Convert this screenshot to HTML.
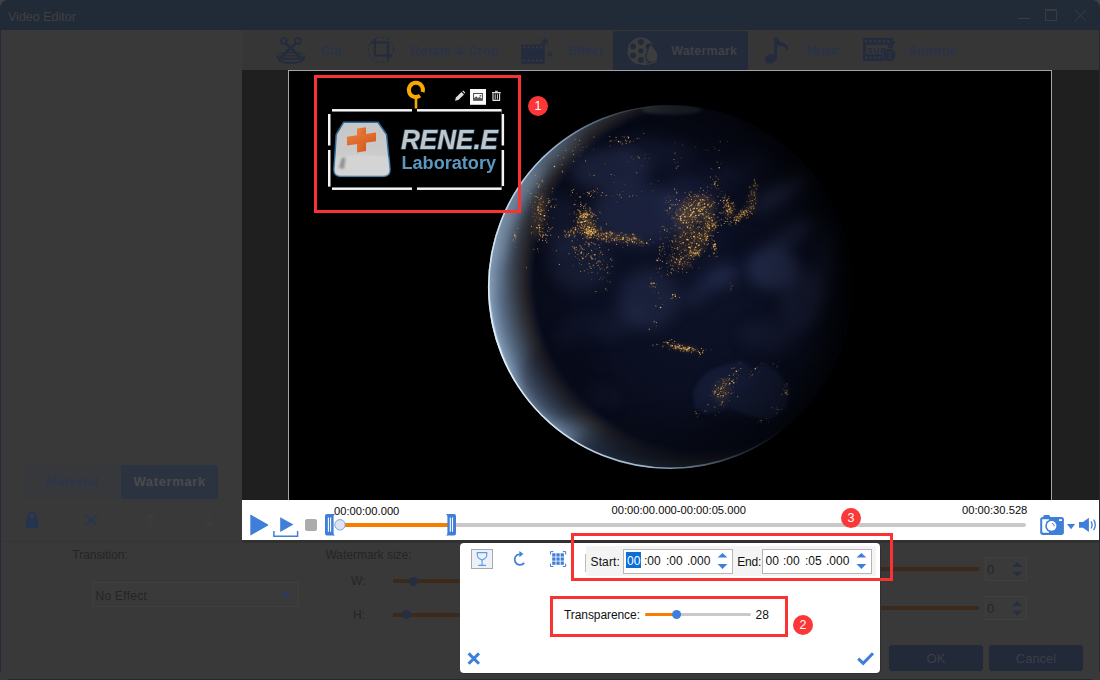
<!DOCTYPE html>
<html>
<head>
<meta charset="utf-8">
<title>Video Editor</title>
<style>
html,body{margin:0;padding:0;}
body{width:1100px;height:680px;overflow:hidden;position:relative;background:#393939;font-family:"Liberation Sans",sans-serif;font-size:13px;color:#222;}
.abs{position:absolute;}
#titlebar{left:0;top:0;width:1100px;height:30px;background:#212a37;border-radius:8px 8px 0 0;}
#tbcorner{left:0;top:0;width:1100px;height:10px;background:#424242;}
#title{left:8px;top:10px;font-size:12.5px;color:#42403f;line-height:15px;white-space:nowrap;}
#lborder{left:0;top:30px;width:1px;height:642px;background:#212a37;}
#rborder{left:1099px;top:30px;width:1px;height:642px;background:#212a37;}
#bborder{left:8px;top:679px;width:1084px;height:1px;background:#212a37;}
#toolbar{left:242px;top:30px;width:857px;height:40px;background:#363636;}
#tabsel{left:613px;top:31px;width:135px;height:39px;background:#232b3a;border-radius:2px 2px 0 0;}
.tbtxt{top:42.5px;font-size:12.5px;font-weight:bold;color:#2a3349;line-height:16px;white-space:nowrap;}
#preview{left:242px;top:70px;width:857px;height:430px;background:#1f1f1f;}
#video{left:288px;top:70px;width:764px;height:430px;background:#000;box-sizing:border-box;border:1px solid #a3a3ab;border-bottom:none;overflow:hidden;}
#playbar{left:242px;top:500px;width:857px;height:40px;background:#fff;}
.time{font-size:11.2px;color:#0a0a0a;line-height:14px;white-space:nowrap;}
.redbox{border:3px solid #fb3232;box-sizing:border-box;}
.badge{width:20px;height:20px;border-radius:10px;background:#fc3737;color:#fff;font-size:12.5px;line-height:20px;text-align:center;}
#popup{left:460px;top:543px;width:420px;height:130px;background:#fff;border-radius:4px;box-shadow:1px 1px 0 #2f2f2f;}
#shadowline{left:242px;top:540px;width:857px;height:3px;background:#313131;}
.dimtxt{color:#232323;font-size:13px;line-height:15px;white-space:nowrap;}
</style>
</head>
<body>
<div id="tbcorner" class="abs"></div>
<div id="titlebar" class="abs"></div>
<div id="title" class="abs">Video Editor</div>
<div id="lborder" class="abs"></div>
<div id="rborder" class="abs"></div>
<div id="bborder" class="abs"></div>

<div id="toolbar" class="abs"></div>
<div id="tabsel" class="abs"></div>
<div class="abs tbtxt" style="left:320.7px">Cut</div>
<div class="abs tbtxt" style="left:410px;letter-spacing:.36px">Rotate &amp; Crop</div>
<div class="abs tbtxt" style="left:568px">Effect</div>
<div class="abs tbtxt" style="left:671.2px;color:#3f4045;letter-spacing:.2px">Watermark</div>
<div class="abs tbtxt" style="left:806.4px;letter-spacing:-.4px">Music</div>
<div class="abs tbtxt" style="left:908.4px;letter-spacing:.33px">Subtitle</div>

<svg class="abs" style="left:242px;top:30px" width="857" height="40" viewBox="242 30 857 40">
<g fill="none" stroke="#232b3e" stroke-width="1.6">
<!-- scissors -->
<circle cx="283.8" cy="40.9" r="2.9"/><circle cx="297.8" cy="40.9" r="2.9"/>
<path d="M285.6 43.4 L300.5 57 M296 43.4 L281 57" stroke-width="2.4"/>
<path d="M277.5 55.5 Q277.5 63 291 63 Q304.5 63 304.5 55.5" stroke-width="1.8"/>
<path d="M279 59 H303 M284 55.8 H298 M286.5 52.6 H295.5" stroke-width="1.3"/>
<ellipse cx="291" cy="55.5" rx="13.5" ry="3" stroke-width="1"/>
<!-- crop -->
<path d="M375 38.5 V55.5 H392" stroke-width="2.2"/>
<path d="M371 42.5 H388 V59.5" stroke-width="2.2"/>
<circle cx="381" cy="49.8" r="12.6" stroke-width="1" stroke-dasharray="3 2.4"/>
</g>
<g fill="#232b3e">
<!-- film + sparkles -->
<path d="M521.2 44.4 H544.6 V63.7 H521.2 Z M523 46.2 V48.6 H525.4 V46.2 Z M527.3 46.2 V48.6 H529.7 V46.2 Z M531.6 46.2 V48.6 H534 V46.2 Z M535.9 46.2 V48.6 H538.3 V46.2 Z M540.2 46.2 V48.6 H542.6 V46.2 Z M523 59.4 V61.8 H525.4 V59.4 Z M527.3 59.4 V61.8 H529.7 V59.4 Z M531.6 59.4 V61.8 H534 V59.4 Z M535.9 59.4 V61.8 H538.3 V59.4 Z M540.2 59.4 V61.8 H542.6 V59.4 Z" fill-rule="evenodd"/>
<path d="M544.5 37.5 V46 M540.5 39.5 L548.5 44 M548.5 39.5 L540.5 44" stroke="#232b3e" stroke-width="1.2" fill="none"/>
<path d="M550 51.8 V57.2 M547.4 53 L552.6 56 M552.6 53 L547.4 56" stroke="#232b3e" stroke-width="1" fill="none"/>
<!-- music -->
<ellipse cx="770.5" cy="58.8" rx="5.6" ry="4.6" transform="rotate(-20 770.5 58.8)"/>
<path d="M774.3 59 V37.5 H777 Q779 42 784 43.5 Q789.5 45.5 787.5 51.5 Q786.5 46.5 781 46 Q778 45.6 777 44.5 V59 Z"/>
<!-- sub -->
<path d="M863 38 H893 V41 H896 L893 45 V61 H863 Z M865 40 V42.4 H867.4 V40 Z M869.4 40 V42.4 H871.8 V40 Z M873.8 40 V42.4 H876.2 V40 Z M878.2 40 V42.4 H880.6 V40 Z M882.6 40 V42.4 H885 V40 Z M887 40 V42.4 H889.4 V40 Z M865 56.4 V58.8 H867.4 V56.4 Z M869.4 56.4 V58.8 H871.8 V56.4 Z M873.8 56.4 V58.8 H876.2 V56.4 Z M878.2 56.4 V58.8 H880.6 V56.4 Z M866 45 H888 V54 H866 Z" fill-rule="evenodd"/>
<circle cx="889.4" cy="55" r="6.6" stroke="#363636" stroke-width="1"/>
</g>
<text x="867" y="52.6" font-family="Liberation Sans, sans-serif" font-size="8" font-weight="bold" fill="#232b3e" textLength="19">SUB</text>
<text x="886.6" y="58.6" font-family="Liberation Serif, serif" font-size="9.5" font-weight="bold" fill="#363636">T</text>
<!-- reel (on selected tab) -->
<g>
<circle cx="640.9" cy="50.9" r="13.4" fill="#3d3d3e"/>
<g fill="#232b3a">
<circle cx="640.9" cy="50.9" r="2.7"/>
<circle cx="640.9" cy="41.9" r="3"/><circle cx="648.7" cy="46.4" r="3"/><circle cx="648.7" cy="55.4" r="3"/><circle cx="640.9" cy="59.9" r="3"/><circle cx="633.1" cy="55.4" r="3"/><circle cx="633.1" cy="46.4" r="3"/>
</g>
<path d="M650.5 44 Q659.5 52 658 58 Q656.5 63 651 62.5 Q645.5 61.5 646 56 Q646.5 51 650.5 44 Z" fill="#3d3d3e" stroke="#232b3a" stroke-width="1.3"/>
<path d="M641 64 Q650 65.5 657 61" fill="none" stroke="#3d3d3e" stroke-width="1.3"/>
</g>
<!-- window controls -->
</svg>
<svg class="abs" style="left:1010px;top:0" width="90" height="30" viewBox="1010 0 90 30">
<path d="M1018 18.5 H1030" stroke="#3a3b40" stroke-width="1"/>
<rect x="1045.5" y="9.5" width="11" height="11" fill="none" stroke="#3a3b40" stroke-width="1"/>
<rect x="1045" y="9" width="12" height="2" fill="#3a3b40"/>
<path d="M1075 10 L1086 21 M1086 10 L1075 21" stroke="#3a3b40" stroke-width="1" fill="none"/>
</svg>

<div id="preview" class="abs"></div>
<div id="video" class="abs">
<svg class="abs" id="earth" style="left:0;top:0" width="762" height="429" viewBox="289 71 762 429">
<defs>
<clipPath id="ec"><circle cx="670" cy="287" r="182"/></clipPath>
<radialGradient id="eg" gradientUnits="userSpaceOnUse" cx="706.7" cy="277.2" r="220">
<stop offset="0" stop-color="#0e1328"/><stop offset=".5" stop-color="#0b0f22"/><stop offset=".78" stop-color="#080b19"/>
<stop offset=".79" stop-color="#0a0e1e"/><stop offset=".827" stop-color="#242228"/><stop offset=".864" stop-color="#323741"/><stop offset=".909" stop-color="#465569"/>
<stop offset=".945" stop-color="#5c708a"/><stop offset=".984" stop-color="#7d96af"/><stop offset="1" stop-color="#c8deee"/></radialGradient>
<radialGradient id="sh" gradientUnits="userSpaceOnUse" cx="590" cy="300" r="275">
<stop offset="0" stop-color="#000" stop-opacity="0"/><stop offset=".55" stop-color="#000" stop-opacity="0"/>
<stop offset=".8" stop-color="#000" stop-opacity=".36"/><stop offset=".95" stop-color="#000" stop-opacity=".86"/><stop offset="1" stop-color="#000" stop-opacity="1"/></radialGradient>
<linearGradient id="rim" gradientUnits="userSpaceOnUse" x1="488" y1="330" x2="720" y2="250">
<stop offset="0" stop-color="#e4f0fa" stop-opacity="1"/><stop offset=".45" stop-color="#b8d4ea" stop-opacity=".8"/><stop offset=".8" stop-color="#7fa0c0" stop-opacity=".25"/><stop offset="1" stop-color="#7fa0c0" stop-opacity="0"/></linearGradient>
<filter color-interpolation-filters="sRGB" id="bl9" x="-50%" y="-50%" width="200%" height="200%"><feGaussianBlur stdDeviation="7"/></filter>
<filter color-interpolation-filters="sRGB" id="bl1" x="-20%" y="-20%" width="140%" height="140%"><feGaussianBlur stdDeviation=".4"/></filter>
<filter color-interpolation-filters="sRGB" id="bl2" x="-20%" y="-20%" width="140%" height="140%"><feGaussianBlur stdDeviation="1.6"/></filter>
<filter color-interpolation-filters="sRGB" id="bl3" x="-50%" y="-50%" width="200%" height="200%"><feGaussianBlur stdDeviation="2.6"/></filter>
</defs>
<g clip-path="url(#ec)">
<rect x="480" y="100" width="380" height="380" fill="url(#eg)"/>
<g filter="url(#bl9)" fill="#313c62">
<ellipse cx="773" cy="268" rx="26" ry="22" transform="rotate(0 773 268)" opacity="0.62"/>
<ellipse cx="792" cy="236" rx="30" ry="9" transform="rotate(-35 792 236)" opacity="0.40"/>
<ellipse cx="722" cy="276" rx="16" ry="11" transform="rotate(-20 722 276)" opacity="0.45"/>
<ellipse cx="700" cy="292" rx="22" ry="9" transform="rotate(-35 700 292)" opacity="0.30"/>
<ellipse cx="648" cy="300" rx="30" ry="30" transform="rotate(0 648 300)" opacity="0.36"/>
<ellipse cx="782" cy="192" rx="34" ry="9" transform="rotate(-32 782 192)" opacity="0.50"/>
<ellipse cx="803" cy="300" rx="22" ry="30" transform="rotate(10 803 300)" opacity="0.34"/>
<ellipse cx="826" cy="262" rx="10" ry="40" transform="rotate(8 826 262)" opacity="0.30"/>
<ellipse cx="770" cy="335" rx="30" ry="16" transform="rotate(0 770 335)" opacity="0.22"/>
<ellipse cx="610" cy="170" rx="40" ry="22" transform="rotate(0 610 170)" opacity="0.40"/>
<ellipse cx="640" cy="215" rx="50" ry="30" transform="rotate(0 640 215)" opacity="0.40"/>
<ellipse cx="580" cy="262" rx="30" ry="30" transform="rotate(0 580 262)" opacity="0.28"/>
<ellipse cx="690" cy="200" rx="30" ry="26" transform="rotate(0 690 200)" opacity="0.22"/>
<ellipse cx="620" cy="322" rx="30" ry="14" transform="rotate(-25 620 322)" opacity="0.16"/>
<ellipse cx="575" cy="330" rx="26" ry="12" transform="rotate(-35 575 330)" opacity="0.12"/>
<ellipse cx="600" cy="395" rx="22" ry="10" transform="rotate(10 600 395)" opacity="0.12"/>
<ellipse cx="745" cy="392" rx="42" ry="24" transform="rotate(0 745 392)" opacity="0.20"/>
<ellipse cx="560" cy="225" rx="20" ry="30" transform="rotate(0 560 225)" opacity="0.20"/>
<ellipse cx="655" cy="150" rx="40" ry="16" transform="rotate(0 655 150)" opacity="0.20"/>
<ellipse cx="740" cy="170" rx="30" ry="12" transform="rotate(-20 740 170)" opacity="0.18"/>
</g>
<ellipse cx="672" cy="110" rx="30" ry="5" fill="#3c474a" opacity=".75" filter="url(#bl2)"/>
<g filter="url(#bl9)" fill="#070a16">
<ellipse cx="690" cy="448" rx="130" ry="34" transform="rotate(-4 690 448)" opacity="0.45"/>
<ellipse cx="770" cy="420" rx="60" ry="40" transform="rotate(-30 770 420)" opacity="0.30"/>
<ellipse cx="700" cy="125" rx="60" ry="18" transform="rotate(0 700 125)" opacity="0.55"/>
<ellipse cx="760" cy="160" rx="40" ry="20" transform="rotate(20 760 160)" opacity="0.40"/>
<ellipse cx="560" cy="380" rx="40" ry="40" transform="rotate(0 560 380)" opacity="0.35"/>
<ellipse cx="640" cy="455" rx="80" ry="14" transform="rotate(0 640 455)" opacity="0.40"/>
<ellipse cx="740" cy="240" rx="16" ry="10" transform="rotate(-30 740 240)" opacity="0.35"/>
</g>
<path d="M693 392 Q700 372 722 366 L742 360 L752 370 L764 362 L778 372 L790 390 L786 408 L770 420 L748 416 L730 408 L706 414 L694 408Z" fill="#1a2340" opacity=".5" filter="url(#bl2)"/>
<g filter="url(#bl3)" fill="#a87433">
<ellipse cx="540.0" cy="217.0" rx="6.0" ry="22.5" transform="rotate(8 540.0 217.0)" opacity="0.17"/>
<ellipse cx="585.0" cy="218.0" rx="7.5" ry="9.0" transform="rotate(20 585.0 218.0)" opacity="0.23"/>
<ellipse cx="590.0" cy="230.0" rx="9.0" ry="7.5" transform="rotate(0 590.0 230.0)" opacity="0.23"/>
<ellipse cx="572.0" cy="232.0" rx="9.0" ry="3.0" transform="rotate(-25 572.0 232.0)" opacity="0.14"/>
<ellipse cx="612.0" cy="237.0" rx="16.5" ry="4.5" transform="rotate(6 612.0 237.0)" opacity="0.19"/>
<ellipse cx="634.0" cy="240.0" rx="9.0" ry="3.8" transform="rotate(8 634.0 240.0)" opacity="0.17"/>
<ellipse cx="697.0" cy="208.0" rx="19.5" ry="12.8" transform="rotate(-15 697.0 208.0)" opacity="0.19"/>
<ellipse cx="709.0" cy="224.0" rx="6.8" ry="9.0" transform="rotate(0 709.0 224.0)" opacity="0.24"/>
<ellipse cx="686.0" cy="222.0" rx="12.0" ry="12.0" transform="rotate(0 686.0 222.0)" opacity="0.14"/>
<ellipse cx="690.0" cy="243.0" rx="16.5" ry="13.5" transform="rotate(0 690.0 243.0)" opacity="0.14"/>
<ellipse cx="680.0" cy="262.0" rx="12.0" ry="6.0" transform="rotate(10 680.0 262.0)" opacity="0.14"/>
<ellipse cx="694.0" cy="252.5" rx="4.5" ry="3.8" transform="rotate(0 694.0 252.5)" opacity="0.24"/>
<ellipse cx="702.0" cy="236.0" rx="9.0" ry="7.5" transform="rotate(0 702.0 236.0)" opacity="0.17"/>
<ellipse cx="729.0" cy="210.0" rx="4.5" ry="8.2" transform="rotate(0 729.0 210.0)" opacity="0.22"/>
<ellipse cx="746.0" cy="212.0" rx="12.0" ry="3.3" transform="rotate(-32 746.0 212.0)" opacity="0.23"/>
<ellipse cx="753.0" cy="195.0" rx="3.3" ry="12.0" transform="rotate(10 753.0 195.0)" opacity="0.19"/>
<ellipse cx="683.0" cy="348.0" rx="16.5" ry="2.7" transform="rotate(10 683.0 348.0)" opacity="0.20"/>
<ellipse cx="722.0" cy="391.0" rx="9.0" ry="12.0" transform="rotate(20 722.0 391.0)" opacity="0.14"/>
</g>
<g filter="url(#bl1)" stroke-linecap="round" fill="none">
<path stroke="#7d5e36" stroke-width=".9" opacity=".8" d="M534.4 221.9h.1M534.9 220.1h.1M539.6 233.6h.1M544.0 232.4h.1M549.3 229.5h.1M535.3 220.0h.1M553.2 218.1h.1M538.9 222.4h.1M542.1 224.4h.1M540.7 220.3h.1M539.1 228.6h.1M542.8 205.2h.1M538.9 231.6h.1M539.6 211.5h.1M539.1 228.3h.1M545.0 213.3h.1M539.2 240.0h.1M538.4 251.8h.1M540.7 205.9h.1M534.3 205.4h.1M552.3 191.8h.1M540.6 217.7h.1M538.8 203.7h.1M534.8 209.2h.1M542.7 193.8h.1M544.2 210.4h.1M546.0 188.6h.1M538.7 206.3h.1M539.3 213.0h.1M548.3 216.9h.1M532.9 231.9h.1M540.5 213.3h.1M537.0 217.9h.1M534.5 216.6h.1M543.9 209.1h.1M539.2 232.1h.1M532.4 216.6h.1M538.8 232.1h.1M536.5 217.0h.1M539.0 217.8h.1M538.7 204.9h.1M539.1 194.1h.1M532.5 207.6h.1M530.6 202.4h.1M532.3 205.4h.1M534.4 196.7h.1M538.4 192.2h.1M538.0 212.5h.1M540.9 198.9h.1M532.2 211.9h.1M529.5 196.8h.1M529.6 199.0h.1M532.4 186.6h.1M542.7 235.4h.1M542.9 232.3h.1M537.4 241.2h.1M539.3 239.0h.1M549.3 231.6h.1M546.7 242.5h.1M515.7 238.1h.1M515.6 232.8h.1M515.9 247.5h.1M515.8 241.7h.1M513.0 240.5h.1M515.3 242.5h.1M527.6 187.1h.1M536.1 192.9h.1M534.9 185.6h.1M527.4 190.3h.1M537.7 176.0h.1M556.2 199.8h.1M553.2 199.4h.1M555.4 198.7h.1M552.3 198.9h.1M554.8 205.4h.1M550.4 201.9h.1M550.6 200.3h.1M556.3 205.0h.1M591.4 191.2h.1M593.1 192.3h.1M587.6 195.6h.1M580.4 196.6h.1M590.0 191.5h.1M588.9 192.7h.1M597.6 192.4h.1M583.8 193.8h.1M589.1 194.9h.1M577.0 193.5h.1M570.9 195.1h.1M602.8 192.9h.1M580.2 150.2h.1M579.7 155.8h.1M566.5 148.4h.1M582.8 150.3h.1M586.4 146.9h.1M575.3 147.6h.1M582.9 147.6h.1M593.6 149.3h.1M578.6 144.5h.1M611.8 140.7h.1M616.4 139.9h.1M622.1 143.7h.1M622.5 136.5h.1M610.1 145.9h.1M630.5 141.1h.1M609.5 141.3h.1M633.4 141.3h.1M625.7 139.6h.1M614.9 140.5h.1M639.0 138.3h.1M642.0 165.6h.1M648.9 158.3h.1M628.1 161.8h.1M644.8 158.4h.1M631.4 157.2h.1M645.3 154.4h.1M633.2 159.2h.1M604.7 164.1h.1M614.0 182.5h.1M589.6 175.0h.1M614.3 175.4h.1M560.3 159.1h.1M622.6 191.5h.1M616.8 202.0h.1M612.4 195.6h.1M636.6 196.0h.1M617.1 194.7h.1M593.5 197.5h.1M588.9 215.2h.1M582.5 216.5h.1M581.0 223.3h.1M579.5 220.4h.1M591.6 217.6h.1M585.6 220.4h.1M583.0 218.7h.1M577.2 221.0h.1M576.9 214.4h.1M583.7 215.1h.1M582.4 217.0h.1M590.8 219.5h.1M587.8 215.4h.1M582.5 225.5h.1M582.4 217.8h.1M600.8 213.0h.1M583.7 215.6h.1M585.4 235.2h.1M585.3 208.1h.1M569.3 214.1h.1M580.4 215.3h.1M583.7 219.5h.1M592.5 226.6h.1M587.5 214.7h.1M574.0 214.1h.1M585.8 229.9h.1M586.1 212.9h.1M582.6 226.5h.1M578.0 222.2h.1M584.4 215.6h.1M576.1 214.3h.1M583.3 224.2h.1M586.3 210.3h.1M587.8 228.9h.1M585.9 221.2h.1M579.9 230.6h.1M594.1 234.3h.1M594.3 230.9h.1M600.2 229.8h.1M590.3 235.6h.1M586.4 233.4h.1M593.2 225.9h.1M572.0 235.2h.1M589.5 235.0h.1M590.9 222.0h.1M591.4 233.9h.1M585.1 232.8h.1M584.7 225.3h.1M593.7 228.3h.1M582.5 219.2h.1M587.7 223.9h.1M581.9 231.3h.1M584.9 235.0h.1M588.0 222.5h.1M586.6 233.0h.1M596.3 238.6h.1M591.7 225.2h.1M584.9 237.3h.1M587.8 223.3h.1M597.9 230.6h.1M593.2 229.5h.1M587.8 237.9h.1M586.1 238.4h.1M587.4 224.1h.1M594.0 229.9h.1M583.8 230.5h.1M601.1 226.3h.1M579.4 233.3h.1M575.8 230.3h.1M578.7 229.1h.1M573.8 227.2h.1M574.5 230.8h.1M572.9 231.3h.1M570.6 229.9h.1M575.0 229.3h.1M574.8 232.6h.1M569.2 232.1h.1M579.1 225.9h.1M574.1 234.0h.1M570.6 232.6h.1M565.5 236.0h.1M581.1 204.8h.1M577.8 206.1h.1M575.8 200.3h.1M581.1 202.6h.1M585.6 208.4h.1M580.3 211.4h.1M580.5 202.2h.1M616.2 240.2h.1M619.4 237.6h.1M606.7 238.7h.1M608.9 240.7h.1M614.3 238.7h.1M622.8 247.4h.1M606.7 237.4h.1M599.4 236.6h.1M604.3 235.0h.1M606.5 242.2h.1M607.0 237.3h.1M607.2 236.1h.1M602.6 236.6h.1M589.6 229.7h.1M623.0 238.0h.1M602.4 232.2h.1M607.9 234.8h.1M619.5 241.6h.1M611.8 234.7h.1M610.1 236.9h.1M615.2 236.2h.1M599.2 238.0h.1M623.0 242.7h.1M627.4 237.7h.1M611.5 238.4h.1M605.7 239.4h.1M598.8 235.7h.1M610.1 235.7h.1M620.6 233.1h.1M602.5 233.3h.1M610.6 236.4h.1M611.4 233.8h.1M614.6 234.1h.1M618.9 239.5h.1M616.8 238.2h.1M618.8 239.5h.1M600.1 237.7h.1M608.3 233.8h.1M633.0 237.2h.1M619.3 235.4h.1M635.0 239.6h.1M641.8 246.1h.1M635.1 239.1h.1M631.8 238.9h.1M623.3 235.8h.1M632.2 237.5h.1M633.3 237.9h.1M632.4 242.7h.1M639.7 245.0h.1M628.5 237.2h.1M625.6 238.0h.1M639.3 239.8h.1M636.8 240.0h.1M632.8 239.0h.1M639.1 240.6h.1M641.5 241.7h.1M630.0 234.9h.1M630.1 239.5h.1M626.4 239.2h.1M643.6 245.7h.1M653.3 242.3h.1M642.0 243.2h.1M642.9 241.2h.1M649.1 244.3h.1M647.4 243.2h.1M648.2 240.3h.1M641.6 241.4h.1M592.1 252.0h.1M589.1 245.8h.1M578.2 250.8h.1M580.3 253.6h.1M579.6 251.1h.1M579.5 263.3h.1M573.0 265.8h.1M583.5 254.8h.1M590.0 244.9h.1M581.4 256.5h.1M587.3 242.9h.1M594.2 267.8h.1M597.1 248.9h.1M599.0 261.8h.1M590.1 256.0h.1M601.1 243.3h.1M574.5 250.3h.1M589.0 242.2h.1M581.2 264.6h.1M579.6 249.2h.1M600.0 250.5h.1M591.5 256.2h.1M591.9 243.0h.1M580.2 246.8h.1M594.9 249.0h.1M582.4 249.6h.1M586.9 255.5h.1M579.9 260.4h.1M574.1 246.9h.1M598.9 257.0h.1M583.7 253.2h.1M590.0 267.0h.1M587.3 269.3h.1M575.5 256.6h.1M590.5 257.3h.1M598.1 231.0h.1M593.0 254.9h.1M599.3 267.2h.1M591.1 279.8h.1M611.8 258.2h.1M602.2 279.3h.1M597.6 265.3h.1M599.4 254.1h.1M582.8 259.9h.1M602.1 268.7h.1M599.4 279.5h.1M597.4 273.1h.1M607.3 264.7h.1M603.6 260.5h.1M581.2 264.7h.1M588.3 273.0h.1M588.6 264.1h.1M602.4 264.5h.1M592.7 266.0h.1M577.5 239.9h.1M574.2 237.2h.1M576.3 247.4h.1M580.9 248.4h.1M574.4 237.4h.1M581.6 249.1h.1M585.8 256.7h.1M579.5 259.8h.1M574.6 249.8h.1M577.7 258.4h.1M574.7 247.8h.1M575.1 249.2h.1M573.6 248.2h.1M574.3 247.9h.1M604.4 269.9h.1M603.9 277.3h.1M607.0 290.5h.1M609.6 281.4h.1M610.1 282.5h.1M607.2 281.1h.1M609.3 273.4h.1M600.7 277.8h.1M661.8 226.9h.1M664.9 237.6h.1M660.4 250.9h.1M662.3 249.5h.1M660.9 238.2h.1M659.9 231.8h.1M667.5 237.4h.1M661.3 251.1h.1M660.3 254.9h.1M668.3 246.2h.1M662.6 248.4h.1M669.4 240.9h.1M664.3 251.6h.1M660.0 239.3h.1M664.7 227.2h.1M656.9 259.3h.1M656.1 268.3h.1M664.2 248.3h.1M661.2 267.8h.1M661.2 276.2h.1M658.7 259.9h.1M667.9 267.1h.1M650.3 278.1h.1M657.9 272.3h.1M681.0 158.0h.1M677.8 162.3h.1M682.4 145.0h.1M675.1 142.8h.1M675.0 162.7h.1M711.0 168.5h.1M716.9 188.7h.1M715.0 149.0h.1M711.9 169.0h.1M727.2 141.6h.1M721.1 163.7h.1M711.2 187.9h.1M705.5 149.8h.1M707.9 150.4h.1M695.7 147.0h.1M713.9 146.8h.1M624.9 184.8h.1M652.7 190.6h.1M641.8 191.2h.1M658.4 180.8h.1M651.0 183.8h.1M707.9 190.7h.1M715.5 176.1h.1M714.0 182.4h.1M715.3 185.9h.1M711.7 184.8h.1M715.3 187.2h.1M714.1 181.5h.1M712.4 179.5h.1M716.5 176.9h.1M700.0 207.8h.1M682.2 211.9h.1M695.3 204.9h.1M704.2 195.9h.1M700.1 207.7h.1M704.2 196.2h.1M693.6 209.3h.1M696.5 215.3h.1M697.8 194.4h.1M704.0 214.2h.1M696.5 203.8h.1M668.6 201.9h.1M671.5 206.2h.1M704.0 195.2h.1M688.5 193.2h.1M693.0 204.4h.1M705.0 204.6h.1M684.2 198.9h.1M680.4 208.6h.1M675.0 189.4h.1M699.1 199.1h.1M693.4 211.1h.1M695.7 216.5h.1M697.8 209.1h.1M693.4 207.2h.1M694.5 212.9h.1M700.1 208.7h.1M671.4 218.4h.1M686.9 212.1h.1M721.7 191.5h.1M691.6 222.2h.1M709.2 213.3h.1M695.1 213.4h.1M701.5 197.7h.1M689.2 198.7h.1M696.2 196.3h.1M709.2 203.0h.1M706.6 192.5h.1M702.1 199.4h.1M708.3 203.5h.1M718.8 188.9h.1M686.4 203.0h.1M685.4 216.6h.1M688.3 199.7h.1M704.5 207.5h.1M687.0 207.9h.1M688.8 225.0h.1M696.1 196.6h.1M688.0 212.0h.1M713.2 217.5h.1M709.5 217.9h.1M703.0 211.9h.1M692.7 214.4h.1M679.6 216.4h.1M710.2 213.4h.1M702.9 213.5h.1M690.3 217.7h.1M699.3 223.4h.1M668.1 202.5h.1M676.1 219.6h.1M709.2 222.7h.1M695.8 217.2h.1M699.2 191.3h.1M690.1 208.0h.1M689.8 191.9h.1M697.1 211.5h.1M695.7 205.3h.1M694.8 212.1h.1M682.6 216.5h.1M719.9 193.9h.1M705.1 209.1h.1M701.9 222.1h.1M708.8 226.8h.1M719.7 220.4h.1M713.7 214.2h.1M707.4 223.0h.1M714.8 218.3h.1M715.4 227.0h.1M706.0 216.9h.1M717.0 221.2h.1M708.7 224.4h.1M713.7 215.8h.1M712.1 214.6h.1M701.5 217.2h.1M711.2 225.1h.1M716.3 208.7h.1M707.1 222.0h.1M705.4 223.7h.1M720.4 213.7h.1M712.0 221.8h.1M709.4 222.0h.1M714.3 230.4h.1M720.6 224.1h.1M715.1 225.5h.1M705.7 213.5h.1M709.1 227.5h.1M713.1 225.8h.1M710.3 219.6h.1M709.2 230.0h.1M699.6 234.9h.1M691.8 216.6h.1M692.2 233.3h.1M698.5 229.2h.1M682.1 222.6h.1M688.8 225.2h.1M677.1 210.7h.1M684.1 222.1h.1M698.9 214.0h.1M700.1 206.3h.1M683.8 220.1h.1M693.3 226.0h.1M683.5 223.0h.1M691.1 212.3h.1M691.7 213.0h.1M672.0 228.4h.1M678.3 219.0h.1M700.3 224.6h.1M686.8 223.2h.1M686.2 233.0h.1M685.9 215.5h.1M694.2 213.2h.1M674.8 238.4h.1M687.7 223.5h.1M686.2 225.7h.1M673.9 236.1h.1M697.4 202.7h.1M696.3 217.6h.1M682.5 229.0h.1M686.2 233.5h.1M680.3 228.3h.1M676.8 219.2h.1M674.6 218.1h.1M670.5 228.2h.1M681.2 223.4h.1M681.1 221.3h.1M683.9 216.8h.1M667.4 210.9h.1M680.1 228.1h.1M685.0 217.0h.1M695.3 220.9h.1M696.6 223.2h.1M685.5 211.1h.1M674.7 218.4h.1M696.1 228.5h.1M689.4 221.9h.1M708.0 222.8h.1M688.7 219.1h.1M676.0 223.8h.1M680.3 217.9h.1M680.8 218.3h.1M687.7 220.2h.1M683.0 238.7h.1M670.7 245.7h.1M692.4 267.6h.1M685.7 248.9h.1M695.5 237.6h.1M679.7 246.4h.1M676.3 241.4h.1M695.8 252.4h.1M705.6 240.5h.1M669.7 232.3h.1M693.9 253.0h.1M687.0 237.0h.1M674.3 235.3h.1M700.0 253.8h.1M681.4 236.2h.1M683.9 226.6h.1M681.7 240.2h.1M671.5 249.7h.1M685.4 245.7h.1M683.8 242.6h.1M680.4 237.5h.1M672.8 250.1h.1M689.6 237.8h.1M713.7 246.0h.1M688.8 244.1h.1M688.3 240.7h.1M697.3 245.7h.1M694.7 231.4h.1M680.7 234.3h.1M672.1 252.2h.1M713.5 225.1h.1M692.3 229.4h.1M690.1 247.2h.1M690.2 255.4h.1M684.4 256.1h.1M676.0 248.5h.1M692.2 226.7h.1M684.5 236.6h.1M714.2 229.2h.1M689.6 244.7h.1M698.4 246.2h.1M680.5 228.1h.1M680.7 250.3h.1M689.8 246.1h.1M706.2 237.4h.1M675.9 239.1h.1M688.5 240.5h.1M682.7 244.2h.1M675.0 230.3h.1M702.3 235.9h.1M694.6 237.4h.1M687.2 237.8h.1M686.1 245.3h.1M712.3 240.1h.1M703.2 226.2h.1M683.5 249.0h.1M678.8 247.8h.1M685.8 239.2h.1M690.6 254.1h.1M687.8 232.6h.1M692.8 232.6h.1M688.2 244.5h.1M713.0 252.5h.1M703.8 243.0h.1M682.5 235.4h.1M699.2 267.8h.1M662.4 256.2h.1M674.3 258.3h.1M671.6 260.8h.1M685.3 264.0h.1M683.8 266.7h.1M670.8 256.2h.1M677.8 266.7h.1M686.7 259.5h.1M689.7 266.6h.1M669.7 255.1h.1M690.7 265.4h.1M662.2 261.4h.1M667.0 261.1h.1M678.7 263.2h.1M680.3 259.5h.1M687.7 264.4h.1M689.0 256.9h.1M682.7 265.6h.1M684.5 263.3h.1M694.2 255.9h.1M677.1 260.8h.1M672.3 254.5h.1M669.1 262.0h.1M690.3 264.8h.1M690.0 262.5h.1M680.7 259.7h.1M693.6 253.3h.1M694.1 247.7h.1M692.2 251.3h.1M695.1 255.7h.1M695.1 249.6h.1M688.9 256.2h.1M695.4 252.9h.1M693.9 252.8h.1M693.6 252.1h.1M695.1 253.0h.1M691.7 253.4h.1M691.2 254.9h.1M716.0 249.9h.1M713.5 240.4h.1M717.1 252.2h.1M714.9 257.0h.1M713.9 249.0h.1M714.5 252.7h.1M711.8 242.9h.1M668.1 195.8h.1M676.9 201.1h.1M665.1 202.7h.1M670.0 208.7h.1M668.0 213.8h.1M674.4 205.1h.1M665.0 210.5h.1M676.9 210.9h.1M676.8 209.5h.1M666.5 200.4h.1M681.1 204.2h.1M673.9 196.8h.1M672.0 216.0h.1M671.9 211.8h.1M669.9 197.1h.1M672.9 203.8h.1M669.2 213.0h.1M669.8 209.9h.1M665.3 198.0h.1M672.8 209.1h.1M709.2 229.8h.1M698.1 240.9h.1M704.3 236.8h.1M692.9 226.2h.1M704.7 234.7h.1M694.3 243.3h.1M692.0 228.7h.1M698.0 234.7h.1M701.5 236.5h.1M711.7 239.0h.1M694.8 237.9h.1M705.3 231.4h.1M699.9 238.8h.1M706.8 244.6h.1M699.2 241.5h.1M711.5 235.7h.1M691.9 246.9h.1M695.3 234.4h.1M706.0 248.2h.1M675.1 270.7h.1M667.5 270.9h.1M682.5 272.1h.1M668.3 275.6h.1M729.0 207.8h.1M727.2 209.1h.1M730.2 208.1h.1M731.7 208.7h.1M726.9 219.3h.1M733.1 204.1h.1M727.4 215.1h.1M733.0 214.9h.1M728.1 216.2h.1M735.6 209.3h.1M733.8 208.6h.1M725.9 209.8h.1M731.0 211.4h.1M723.1 220.1h.1M731.3 213.1h.1M728.5 202.6h.1M731.8 210.9h.1M727.3 213.1h.1M728.4 213.8h.1M734.2 209.4h.1M734.3 219.3h.1M724.4 198.6h.1M730.5 206.0h.1M734.9 205.4h.1M729.4 200.4h.1M725.5 213.3h.1M731.9 207.7h.1M726.7 205.6h.1M725.4 204.5h.1M725.4 194.4h.1M722.0 201.2h.1M722.3 201.5h.1M728.1 205.0h.1M725.0 199.0h.1M727.3 200.2h.1M727.5 199.5h.1M742.0 216.3h.1M748.5 208.9h.1M738.0 217.8h.1M740.1 217.5h.1M756.7 200.7h.1M739.0 215.3h.1M730.2 223.9h.1M739.0 217.3h.1M739.1 216.4h.1M744.2 206.4h.1M740.9 214.1h.1M739.3 213.4h.1M740.3 216.5h.1M740.6 214.7h.1M756.1 203.0h.1M750.8 211.4h.1M726.8 221.5h.1M744.5 210.2h.1M736.4 217.9h.1M745.8 215.4h.1M738.5 213.8h.1M750.9 213.1h.1M747.5 210.4h.1M735.9 215.3h.1M744.5 214.1h.1M748.7 209.8h.1M752.6 207.0h.1M751.0 209.2h.1M742.1 209.4h.1M753.8 201.0h.1M758.0 186.6h.1M750.0 198.8h.1M752.8 194.8h.1M751.3 190.4h.1M748.5 210.5h.1M755.7 196.8h.1M754.5 186.2h.1M747.5 215.5h.1M752.2 191.0h.1M735.1 220.6h.1M736.2 223.3h.1M736.8 219.5h.1M730.7 225.7h.1M731.0 222.2h.1M735.8 221.3h.1M737.2 217.8h.1M737.0 220.2h.1M650.7 283.8h.1M656.3 284.3h.1M652.0 283.9h.1M651.7 286.9h.1M650.9 282.5h.1M649.5 286.8h.1M660.4 298.2h.1M658.5 292.3h.1M662.7 304.5h.1M654.1 291.9h.1M658.4 293.0h.1M672.3 296.9h.1M676.1 298.2h.1M675.5 295.9h.1M656.3 326.0h.1M731.0 288.2h.1M732.4 285.4h.1M730.2 283.3h.1M730.0 290.3h.1M731.0 286.4h.1M731.2 289.2h.1M676.7 348.3h.1M662.7 346.3h.1M680.1 344.7h.1M692.4 350.3h.1M677.8 348.6h.1M705.9 349.6h.1M680.8 346.8h.1M688.3 348.2h.1M675.7 349.6h.1M657.9 344.6h.1M688.4 351.4h.1M681.3 345.6h.1M669.2 349.4h.1M687.6 346.7h.1M670.4 344.9h.1M687.1 347.8h.1M710.9 350.0h.1M676.2 346.9h.1M697.1 349.4h.1M663.8 345.6h.1M684.4 350.7h.1M695.0 350.6h.1M674.7 345.9h.1M670.3 345.7h.1M678.1 343.4h.1M702.3 350.6h.1M689.3 348.5h.1M668.0 344.3h.1M687.4 350.3h.1M677.0 345.9h.1M665.7 342.4h.1M666.0 342.7h.1M674.0 343.5h.1M668.7 344.3h.1M666.5 341.3h.1M663.7 342.1h.1M672.5 342.8h.1M702.4 352.8h.1M699.1 356.8h.1M703.0 351.8h.1M699.7 353.4h.1M696.9 351.4h.1M688.2 349.9h.1M698.5 351.0h.1M715.6 415.1h.1M722.6 385.2h.1M722.6 397.5h.1M736.5 377.9h.1M729.5 400.6h.1M726.4 393.4h.1M718.3 390.4h.1M721.2 395.9h.1M725.6 393.1h.1M725.0 391.0h.1M722.0 389.1h.1M717.4 396.9h.1M720.8 387.2h.1M727.1 380.7h.1M733.2 392.7h.1M721.1 391.7h.1M723.2 392.4h.1M717.6 394.9h.1M717.1 389.2h.1M719.1 405.0h.1M721.2 378.3h.1M722.6 383.7h.1M713.6 392.2h.1M723.6 379.7h.1M716.5 389.2h.1M710.2 395.6h.1M721.6 402.3h.1M714.1 394.5h.1M723.2 388.9h.1M723.4 406.0h.1M718.8 412.6h.1M722.7 391.4h.1M714.2 391.2h.1M724.8 388.1h.1M723.0 393.4h.1M722.9 391.2h.1M712.4 391.2h.1M736.8 382.0h.1M727.2 378.5h.1M725.9 380.1h.1M730.6 389.0h.1M734.3 383.0h.1M738.6 375.7h.1M726.1 381.1h.1M733.2 373.9h.1M733.7 387.0h.1M724.8 378.8h.1M718.1 381.6h.1M734.2 373.9h.1M733.9 368.4h.1M735.8 371.7h.1M734.3 367.5h.1M737.0 378.8h.1M736.8 373.9h.1M738.2 370.3h.1M759.1 371.9h.1M761.3 363.4h.1M751.5 371.4h.1M739.3 363.1h.1M749.6 374.4h.1M756.9 367.4h.1M749.7 377.3h.1M751.4 375.6h.1M786.6 386.6h.1M784.5 385.2h.1M786.8 391.5h.1M783.5 389.4h.1M776.3 413.6h.1M777.0 412.8h.1M778.9 409.6h.1M776.4 407.8h.1M781.8 409.6h.1M775.9 409.1h.1M768.4 422.1h.1M761.1 422.5h.1M757.8 422.3h.1M766.5 418.4h.1M697.6 416.7h.1M699.0 414.0h.1M694.9 411.3h.1M695.7 411.5h.1M776.3 366.9h.1M777.3 366.1h.1M777.8 366.7h.1M779.0 361.7h.1M773.1 363.7h.1M773.5 363.9h.1"/>
<path stroke="#b08242" stroke-width="1.1" d="M541.4 210.7h.1M539.3 199.7h.1M544.6 219.4h.1M534.7 213.7h.1M539.7 202.7h.1M540.9 204.4h.1M531.4 233.0h.1M548.5 210.5h.1M537.7 248.9h.1M537.9 197.6h.1M541.1 209.6h.1M539.8 234.4h.1M539.2 239.8h.1M539.6 211.0h.1M542.9 228.2h.1M538.1 208.1h.1M542.7 210.2h.1M548.2 202.9h.1M548.6 227.6h.1M538.3 209.6h.1M540.5 211.5h.1M533.8 249.3h.1M542.9 218.7h.1M541.8 220.8h.1M538.6 213.3h.1M540.7 198.4h.1M542.0 180.3h.1M526.4 267.8h.1M549.0 200.4h.1M531.5 226.4h.1M539.7 219.2h.1M540.1 207.8h.1M546.5 205.5h.1M549.2 202.3h.1M542.6 181.4h.1M540.1 231.5h.1M547.1 224.0h.1M541.3 198.1h.1M540.2 207.8h.1M540.0 219.0h.1M535.4 196.3h.1M530.9 193.4h.1M538.3 187.4h.1M541.8 196.1h.1M538.8 186.2h.1M535.0 202.0h.1M543.2 201.9h.1M536.8 196.5h.1M536.5 196.8h.1M547.6 235.5h.1M542.8 234.7h.1M550.8 228.9h.1M552.2 227.5h.1M543.6 234.8h.1M540.5 235.9h.1M550.7 235.1h.1M547.6 231.1h.1M545.5 234.6h.1M545.5 240.5h.1M542.5 236.5h.1M539.3 229.9h.1M546.2 235.2h.1M546.9 242.0h.1M542.6 240.4h.1M545.8 234.0h.1M546.0 238.7h.1M542.4 237.5h.1M543.7 235.6h.1M542.1 231.8h.1M515.9 236.5h.1M515.5 237.9h.1M514.9 234.1h.1M517.7 228.5h.1M513.5 239.9h.1M539.1 184.9h.1M528.0 190.8h.1M535.2 175.4h.1M537.0 183.6h.1M554.5 207.4h.1M548.6 201.9h.1M552.6 188.3h.1M548.3 198.5h.1M551.2 206.1h.1M551.0 206.9h.1M573.6 189.5h.1M572.0 190.6h.1M587.3 192.4h.1M601.0 195.2h.1M572.4 192.4h.1M580.3 196.9h.1M590.4 196.5h.1M593.6 190.5h.1M602.2 192.6h.1M594.8 191.5h.1M591.4 195.3h.1M579.5 140.5h.1M593.9 137.1h.1M565.6 150.5h.1M572.8 150.8h.1M575.2 139.2h.1M626.1 143.6h.1M609.6 136.2h.1M622.3 144.0h.1M629.7 141.9h.1M625.3 140.5h.1M624.2 137.0h.1M643.7 133.2h.1M628.0 136.5h.1M626.6 141.3h.1M620.6 142.1h.1M616.0 137.4h.1M610.9 140.9h.1M637.1 138.5h.1M638.0 156.8h.1M639.1 157.9h.1M594.0 175.4h.1M611.2 174.5h.1M585.5 160.9h.1M561.8 164.8h.1M562.2 171.1h.1M557.8 155.5h.1M562.6 172.0h.1M563.7 157.7h.1M573.5 154.5h.1M573.6 161.3h.1M606.1 195.4h.1M632.6 195.7h.1M629.3 196.2h.1M621.2 197.5h.1M597.4 188.8h.1M619.8 194.9h.1M573.6 221.0h.1M587.7 215.1h.1M578.0 223.0h.1M590.9 212.0h.1M577.5 222.3h.1M581.1 213.8h.1M593.6 220.5h.1M583.2 213.8h.1M581.6 215.4h.1M577.7 221.3h.1M584.2 227.6h.1M577.3 225.6h.1M585.5 214.3h.1M590.6 212.7h.1M578.9 219.2h.1M589.7 207.9h.1M589.6 210.6h.1M589.0 220.1h.1M584.5 215.4h.1M591.3 215.7h.1M575.7 227.5h.1M588.4 229.6h.1M580.4 213.3h.1M578.3 228.8h.1M578.8 210.4h.1M584.3 213.1h.1M586.6 212.4h.1M582.2 217.7h.1M582.9 215.6h.1M581.8 225.1h.1M584.6 216.5h.1M588.2 231.9h.1M579.9 217.4h.1M589.6 214.5h.1M577.5 209.7h.1M593.1 214.9h.1M586.8 213.2h.1M586.7 220.0h.1M585.4 210.8h.1M581.4 222.7h.1M583.8 206.5h.1M577.5 209.7h.1M586.7 215.4h.1M585.2 218.0h.1M594.1 214.1h.1M579.0 222.5h.1M594.0 223.9h.1M581.6 217.5h.1M595.9 215.6h.1M588.9 214.4h.1M584.2 226.3h.1M592.4 213.3h.1M585.9 204.1h.1M587.2 221.0h.1M582.9 214.8h.1M592.6 216.6h.1M578.7 218.6h.1M590.3 222.4h.1M581.3 228.1h.1M579.9 226.6h.1M581.4 224.6h.1M599.8 212.0h.1M576.6 217.5h.1M591.0 217.0h.1M579.7 212.9h.1M583.5 208.1h.1M574.2 212.0h.1M586.7 214.9h.1M590.4 209.0h.1M581.6 217.1h.1M583.7 217.6h.1M579.9 216.3h.1M580.7 227.8h.1M591.6 215.8h.1M583.9 219.3h.1M584.7 225.8h.1M595.7 231.9h.1M593.3 243.0h.1M593.8 233.9h.1M590.6 233.8h.1M588.7 229.1h.1M588.8 228.6h.1M585.9 220.6h.1M595.1 226.4h.1M591.5 235.5h.1M592.6 227.4h.1M598.3 233.4h.1M589.0 226.1h.1M598.0 239.7h.1M595.2 230.6h.1M600.8 235.2h.1M590.9 224.0h.1M594.7 235.5h.1M587.6 234.9h.1M596.2 235.9h.1M588.6 222.7h.1M590.7 234.1h.1M595.0 229.4h.1M590.8 237.0h.1M586.0 233.0h.1M589.3 232.9h.1M586.4 230.5h.1M590.2 232.2h.1M587.0 231.3h.1M595.9 230.7h.1M582.0 230.2h.1M582.8 238.6h.1M589.3 237.4h.1M591.1 223.0h.1M584.7 232.8h.1M595.9 221.0h.1M584.9 229.8h.1M591.2 237.5h.1M597.5 230.0h.1M590.5 235.8h.1M582.0 227.9h.1M597.7 218.5h.1M582.9 238.6h.1M600.9 227.9h.1M585.0 226.0h.1M585.7 229.2h.1M588.3 232.8h.1M597.5 234.7h.1M580.2 232.6h.1M594.3 231.3h.1M589.9 237.9h.1M593.7 224.3h.1M591.0 227.5h.1M582.6 233.4h.1M606.4 223.9h.1M583.4 228.5h.1M588.7 234.9h.1M591.6 216.0h.1M594.2 228.5h.1M586.9 228.9h.1M589.4 233.6h.1M601.7 234.2h.1M593.4 231.5h.1M588.4 231.0h.1M585.4 224.2h.1M573.8 231.8h.1M571.4 230.4h.1M573.0 228.1h.1M565.8 236.9h.1M573.6 233.4h.1M565.2 231.8h.1M568.1 232.2h.1M568.7 236.7h.1M573.5 232.2h.1M566.5 234.5h.1M558.5 237.1h.1M586.1 229.5h.1M575.6 230.0h.1M570.6 231.3h.1M564.3 230.8h.1M577.6 231.9h.1M564.9 235.2h.1M575.2 227.6h.1M568.4 231.7h.1M581.6 205.3h.1M584.9 205.8h.1M579.2 197.0h.1M580.0 211.4h.1M574.1 204.6h.1M579.2 210.2h.1M575.0 204.2h.1M580.5 204.4h.1M580.7 206.5h.1M626.1 234.2h.1M595.0 230.9h.1M625.0 235.0h.1M626.2 237.0h.1M611.4 234.1h.1M593.7 237.6h.1M601.9 239.8h.1M587.3 236.4h.1M611.8 232.9h.1M622.4 239.3h.1M586.4 237.0h.1M606.9 232.2h.1M611.6 240.1h.1M621.7 232.7h.1M620.7 239.4h.1M609.7 232.3h.1M633.9 234.9h.1M604.0 233.6h.1M623.0 239.5h.1M597.5 238.5h.1M610.3 231.6h.1M634.1 237.1h.1M603.6 239.1h.1M626.4 241.9h.1M606.4 236.3h.1M615.1 238.3h.1M606.3 241.4h.1M608.8 237.2h.1M598.5 236.7h.1M627.6 245.3h.1M610.7 235.2h.1M617.2 237.8h.1M632.5 234.4h.1M588.3 234.5h.1M606.0 241.1h.1M603.9 238.5h.1M604.4 238.7h.1M631.6 240.8h.1M598.5 234.9h.1M612.7 238.4h.1M606.7 239.6h.1M612.3 233.5h.1M587.8 238.8h.1M589.3 230.4h.1M603.6 234.4h.1M601.0 233.3h.1M616.5 237.9h.1M609.0 242.0h.1M619.3 235.4h.1M617.0 235.2h.1M629.2 240.6h.1M612.7 233.1h.1M636.3 238.9h.1M603.2 238.4h.1M605.4 233.0h.1M589.3 232.1h.1M627.5 242.9h.1M623.3 238.8h.1M601.2 229.7h.1M625.9 241.5h.1M605.8 235.3h.1M617.0 239.9h.1M601.3 235.5h.1M617.9 235.2h.1M581.4 234.8h.1M609.6 234.7h.1M610.7 232.9h.1M643.9 243.2h.1M627.3 239.9h.1M634.2 238.9h.1M627.3 237.7h.1M634.6 241.7h.1M633.6 238.0h.1M641.3 241.4h.1M629.3 239.5h.1M634.3 242.8h.1M633.0 233.9h.1M629.1 238.4h.1M639.9 242.8h.1M642.0 242.5h.1M631.7 239.5h.1M636.5 243.2h.1M627.9 240.6h.1M631.1 239.1h.1M650.4 239.4h.1M608.6 249.7h.1M590.8 256.1h.1M568.9 253.8h.1M589.2 263.6h.1M591.2 257.3h.1M591.4 242.3h.1M588.7 246.0h.1M559.4 264.4h.1M600.9 252.8h.1M610.4 259.1h.1M577.8 254.2h.1M584.3 270.7h.1M585.6 256.8h.1M581.5 251.9h.1M595.0 244.6h.1M616.5 244.4h.1M588.5 253.5h.1M586.9 254.2h.1M581.2 247.1h.1M598.8 245.0h.1M576.2 249.8h.1M601.7 238.8h.1M556.3 250.7h.1M596.4 263.3h.1M599.7 247.5h.1M600.9 252.1h.1M569.6 235.6h.1M575.4 252.6h.1M595.0 244.0h.1M602.6 254.6h.1M600.4 261.8h.1M607.5 272.7h.1M612.1 266.2h.1M607.7 267.0h.1M591.1 268.4h.1M595.1 258.9h.1M591.5 250.4h.1M611.8 260.2h.1M599.0 260.9h.1M590.0 266.7h.1M597.8 261.9h.1M593.5 265.1h.1M600.1 269.1h.1M591.9 272.2h.1M580.5 271.3h.1M606.6 267.8h.1M598.2 265.3h.1M586.0 241.9h.1M576.1 247.4h.1M572.1 240.9h.1M584.0 249.2h.1M582.3 248.7h.1M572.7 246.8h.1M580.0 245.6h.1M574.4 248.1h.1M584.9 244.2h.1M574.9 235.9h.1M605.7 288.9h.1M595.8 291.5h.1M662.9 226.2h.1M667.0 229.8h.1M664.3 229.2h.1M659.5 250.1h.1M664.6 230.2h.1M660.3 246.7h.1M659.4 247.3h.1M663.0 243.6h.1M659.3 253.8h.1M662.5 261.6h.1M659.7 268.6h.1M660.2 260.1h.1M666.7 263.4h.1M676.3 168.1h.1M675.0 153.1h.1M678.0 166.1h.1M673.9 159.5h.1M720.2 141.7h.1M719.0 150.2h.1M717.2 162.0h.1M636.7 172.8h.1M717.6 185.4h.1M707.5 187.0h.1M715.9 181.4h.1M718.2 179.0h.1M714.1 184.7h.1M710.3 177.1h.1M691.5 199.4h.1M684.8 211.7h.1M671.0 204.2h.1M687.8 207.9h.1M705.3 207.0h.1M694.9 194.5h.1M703.2 207.3h.1M700.2 211.1h.1M682.3 207.6h.1M707.8 197.5h.1M666.9 210.6h.1M684.7 220.5h.1M685.0 192.7h.1M691.1 192.0h.1M706.7 212.4h.1M714.6 214.6h.1M688.7 205.1h.1M689.7 206.4h.1M715.0 182.9h.1M686.7 220.9h.1M700.7 202.3h.1M708.2 205.1h.1M714.7 202.6h.1M693.5 202.7h.1M688.3 214.0h.1M692.4 222.6h.1M699.3 209.4h.1M708.5 217.9h.1M676.8 192.9h.1M700.1 208.5h.1M702.6 194.6h.1M694.8 207.0h.1M690.3 208.9h.1M676.6 192.0h.1M696.6 195.8h.1M711.4 204.8h.1M683.4 205.4h.1M703.6 207.9h.1M695.9 217.7h.1M684.6 212.2h.1M672.6 241.9h.1M702.2 210.7h.1M677.7 204.2h.1M710.8 195.0h.1M691.7 204.0h.1M698.7 210.1h.1M704.7 218.1h.1M697.4 205.5h.1M702.0 201.7h.1M695.7 200.4h.1M687.0 197.3h.1M690.6 216.1h.1M713.4 201.7h.1M689.5 216.4h.1M688.3 203.8h.1M700.8 188.1h.1M676.3 199.4h.1M700.1 222.0h.1M704.0 200.4h.1M701.9 213.7h.1M696.9 222.0h.1M679.4 200.6h.1M698.6 196.0h.1M681.6 215.6h.1M710.3 206.4h.1M706.0 197.1h.1M698.0 204.1h.1M702.1 208.9h.1M724.3 223.4h.1M692.3 204.7h.1M694.3 217.5h.1M712.8 203.8h.1M700.0 205.0h.1M685.4 216.7h.1M703.1 209.3h.1M680.2 210.1h.1M720.4 200.4h.1M707.7 199.8h.1M689.2 195.1h.1M684.1 214.1h.1M692.0 219.4h.1M709.5 207.1h.1M702.2 207.3h.1M717.9 196.5h.1M694.0 216.5h.1M718.6 203.6h.1M689.5 194.6h.1M694.3 201.3h.1M721.4 225.4h.1M698.1 203.5h.1M692.9 208.9h.1M675.5 204.6h.1M701.1 221.2h.1M685.0 217.0h.1M690.0 202.8h.1M711.6 205.9h.1M704.2 200.3h.1M697.8 196.8h.1M688.4 222.5h.1M690.9 196.6h.1M680.2 210.1h.1M703.5 190.5h.1M694.2 196.6h.1M700.0 205.7h.1M679.1 227.9h.1M676.8 214.4h.1M697.9 207.0h.1M693.7 208.5h.1M702.5 204.7h.1M697.5 220.9h.1M692.5 217.0h.1M699.9 213.7h.1M684.0 202.1h.1M698.4 205.5h.1M716.0 222.3h.1M708.8 213.8h.1M708.3 231.3h.1M706.1 231.7h.1M712.0 223.2h.1M713.4 214.2h.1M715.8 227.7h.1M719.8 212.6h.1M706.0 216.1h.1M704.7 230.3h.1M706.0 225.0h.1M706.6 217.1h.1M713.5 224.1h.1M709.5 228.2h.1M705.6 211.5h.1M718.0 225.6h.1M708.3 215.8h.1M708.1 226.0h.1M708.3 224.3h.1M703.2 214.9h.1M699.7 211.7h.1M699.7 227.0h.1M713.0 224.4h.1M713.5 223.7h.1M708.3 221.5h.1M707.2 225.9h.1M701.8 229.0h.1M711.9 223.4h.1M709.1 225.0h.1M712.0 221.0h.1M705.5 223.3h.1M712.8 226.2h.1M712.2 230.5h.1M707.7 225.5h.1M708.8 228.2h.1M705.9 220.7h.1M714.0 228.2h.1M717.9 232.5h.1M707.9 216.8h.1M711.2 217.6h.1M715.9 225.6h.1M698.9 221.8h.1M705.3 233.1h.1M704.3 227.8h.1M706.8 236.2h.1M715.0 223.1h.1M709.7 225.6h.1M700.9 213.6h.1M714.2 225.3h.1M701.5 234.9h.1M711.6 217.5h.1M715.7 226.9h.1M717.8 217.1h.1M707.1 227.2h.1M704.1 218.1h.1M707.5 223.6h.1M714.7 224.2h.1M706.6 209.8h.1M709.5 227.9h.1M684.0 232.0h.1M690.4 227.2h.1M679.9 208.8h.1M687.9 216.8h.1M698.8 226.7h.1M692.6 221.4h.1M699.4 209.8h.1M695.1 219.2h.1M683.3 220.8h.1M685.0 206.4h.1M678.6 218.5h.1M693.4 226.0h.1M681.5 220.4h.1M684.3 220.1h.1M682.7 235.1h.1M685.5 233.5h.1M694.4 232.4h.1M683.2 232.1h.1M690.9 224.9h.1M676.9 215.4h.1M680.9 217.7h.1M673.0 217.9h.1M675.6 212.7h.1M667.0 231.3h.1M690.8 230.3h.1M694.5 236.4h.1M684.9 217.3h.1M675.2 225.6h.1M689.9 228.4h.1M681.0 243.6h.1M691.3 252.6h.1M674.6 248.3h.1M707.2 238.4h.1M699.0 245.6h.1M690.7 251.7h.1M709.3 256.0h.1M687.9 254.8h.1M690.4 248.8h.1M671.5 269.1h.1M701.9 248.7h.1M688.4 258.3h.1M690.2 258.7h.1M699.1 250.7h.1M672.0 247.5h.1M704.8 236.5h.1M679.8 241.7h.1M690.2 242.0h.1M689.7 252.1h.1M700.1 249.4h.1M682.1 263.9h.1M690.9 236.5h.1M691.6 246.1h.1M675.4 241.1h.1M680.9 237.1h.1M686.0 250.1h.1M701.8 241.3h.1M677.8 248.7h.1M688.9 244.0h.1M663.3 246.3h.1M695.7 252.6h.1M686.0 255.9h.1M675.1 235.7h.1M694.8 239.0h.1M689.6 253.1h.1M681.3 252.5h.1M672.2 240.7h.1M684.7 261.8h.1M696.1 250.4h.1M684.7 250.3h.1M679.5 254.3h.1M677.4 249.3h.1M708.4 243.7h.1M691.4 255.4h.1M701.6 240.3h.1M679.8 264.0h.1M694.2 241.7h.1M694.1 249.9h.1M671.7 240.7h.1M704.7 251.1h.1M698.1 251.1h.1M674.2 253.8h.1M677.5 247.6h.1M679.9 236.9h.1M691.0 232.8h.1M682.7 257.6h.1M678.8 260.0h.1M672.8 265.7h.1M687.8 262.6h.1M680.2 261.1h.1M673.7 257.8h.1M675.6 262.6h.1M683.4 257.9h.1M686.7 272.2h.1M671.3 260.2h.1M679.0 264.4h.1M678.1 271.7h.1M680.8 256.6h.1M672.6 256.7h.1M670.7 265.3h.1M682.4 268.9h.1M658.4 258.0h.1M664.9 254.3h.1M693.7 259.4h.1M674.7 262.1h.1M690.8 255.6h.1M696.2 253.3h.1M692.4 257.0h.1M698.0 253.1h.1M692.9 252.2h.1M691.5 252.2h.1M695.9 254.9h.1M690.1 250.6h.1M699.3 252.1h.1M693.6 256.0h.1M694.6 253.5h.1M691.3 252.0h.1M690.2 255.5h.1M695.2 252.3h.1M691.6 255.7h.1M700.2 250.5h.1M698.4 254.9h.1M694.9 249.0h.1M698.8 253.8h.1M699.4 255.9h.1M690.7 250.6h.1M693.0 253.6h.1M696.8 253.7h.1M697.8 251.1h.1M693.5 252.6h.1M695.5 253.1h.1M713.5 247.3h.1M713.6 253.8h.1M714.0 253.4h.1M715.4 246.5h.1M714.9 250.3h.1M715.1 245.8h.1M712.8 244.7h.1M713.5 247.0h.1M714.9 248.7h.1M716.9 256.3h.1M716.0 248.1h.1M714.3 249.4h.1M716.1 248.5h.1M711.8 248.0h.1M714.5 241.1h.1M672.9 205.0h.1M674.5 189.1h.1M670.4 200.2h.1M697.7 227.6h.1M685.3 234.8h.1M691.3 234.0h.1M705.3 235.2h.1M691.7 238.2h.1M700.9 234.6h.1M693.7 231.9h.1M706.4 238.3h.1M705.3 238.8h.1M708.2 240.7h.1M699.4 235.6h.1M706.9 234.0h.1M704.5 243.9h.1M702.9 239.2h.1M694.2 237.2h.1M693.9 240.3h.1M697.6 237.1h.1M706.3 236.9h.1M704.4 234.3h.1M708.0 227.5h.1M707.4 236.8h.1M704.9 233.6h.1M707.3 244.6h.1M698.1 237.3h.1M713.1 235.9h.1M710.2 235.3h.1M701.5 228.6h.1M678.6 268.3h.1M673.5 270.0h.1M671.5 273.1h.1M670.6 272.2h.1M672.5 268.7h.1M667.3 274.3h.1M721.3 219.3h.1M728.3 203.0h.1M730.1 209.3h.1M721.8 213.1h.1M730.5 207.6h.1M731.6 213.0h.1M734.1 217.3h.1M729.1 212.3h.1M725.2 221.4h.1M727.4 203.0h.1M727.9 214.5h.1M727.6 218.9h.1M724.5 207.0h.1M728.6 204.9h.1M731.1 212.9h.1M726.4 206.0h.1M723.2 207.3h.1M730.1 217.4h.1M729.9 211.3h.1M732.8 203.6h.1M733.1 202.4h.1M726.3 204.0h.1M731.3 212.7h.1M726.0 204.1h.1M729.1 209.9h.1M723.7 212.0h.1M725.7 217.8h.1M725.1 205.5h.1M726.9 206.2h.1M730.3 211.4h.1M728.9 206.3h.1M732.6 210.7h.1M730.1 211.9h.1M730.4 208.5h.1M728.4 209.5h.1M732.2 203.7h.1M733.6 206.3h.1M727.2 199.4h.1M731.6 210.4h.1M722.8 197.6h.1M724.8 197.6h.1M728.5 198.6h.1M728.9 206.6h.1M729.0 196.8h.1M723.6 202.9h.1M731.1 203.1h.1M725.0 196.0h.1M727.5 202.3h.1M740.3 219.0h.1M753.5 208.6h.1M746.6 218.0h.1M739.8 219.0h.1M753.2 206.6h.1M740.7 212.0h.1M745.9 210.3h.1M748.3 217.2h.1M750.0 207.1h.1M744.4 213.8h.1M741.2 212.1h.1M744.0 212.8h.1M747.5 214.5h.1M739.1 214.2h.1M744.7 211.1h.1M727.7 221.5h.1M740.4 216.0h.1M746.9 212.5h.1M738.9 214.5h.1M736.8 216.8h.1M755.5 203.4h.1M753.3 205.2h.1M751.1 206.9h.1M742.1 210.7h.1M740.5 215.3h.1M749.7 211.6h.1M741.2 216.7h.1M747.2 212.6h.1M744.2 214.5h.1M737.5 216.6h.1M740.4 210.8h.1M736.7 219.0h.1M751.2 208.2h.1M728.9 224.0h.1M747.6 214.7h.1M738.2 218.1h.1M754.2 208.1h.1M744.9 213.2h.1M741.7 217.1h.1M744.6 215.6h.1M750.6 212.0h.1M735.2 216.9h.1M752.5 214.0h.1M744.8 215.3h.1M751.5 213.5h.1M736.6 216.8h.1M743.0 214.5h.1M747.0 207.8h.1M753.9 192.9h.1M754.1 180.6h.1M757.1 185.1h.1M753.9 185.7h.1M751.0 208.6h.1M751.2 194.7h.1M749.8 201.3h.1M755.2 183.5h.1M752.5 200.6h.1M754.8 194.6h.1M755.4 198.0h.1M745.2 210.3h.1M754.0 195.6h.1M755.0 182.1h.1M754.5 192.0h.1M753.6 185.3h.1M749.5 186.8h.1M751.1 200.8h.1M755.4 183.8h.1M754.5 179.3h.1M751.1 191.7h.1M749.9 187.2h.1M755.0 185.7h.1M754.6 199.5h.1M748.7 195.9h.1M756.2 188.9h.1M746.9 201.7h.1M751.3 193.0h.1M751.2 203.4h.1M735.5 222.6h.1M735.8 224.0h.1M738.6 218.1h.1M733.9 220.4h.1M730.3 221.5h.1M739.2 216.6h.1M731.8 222.2h.1M735.8 220.2h.1M736.1 219.9h.1M734.6 218.7h.1M651.7 283.9h.1M651.1 283.6h.1M651.9 283.0h.1M653.1 286.3h.1M655.2 287.1h.1M671.0 298.5h.1M655.8 305.9h.1M679.6 297.5h.1M674.9 294.4h.1M672.7 298.0h.1M649.3 329.5h.1M649.2 329.0h.1M656.4 322.6h.1M654.2 321.7h.1M654.1 321.4h.1M684.3 347.9h.1M662.7 346.8h.1M683.5 348.7h.1M671.6 345.3h.1M703.5 350.2h.1M691.4 352.1h.1M698.3 351.3h.1M679.8 347.7h.1M689.1 348.6h.1M676.1 347.9h.1M683.1 347.8h.1M689.1 350.3h.1M652.9 345.1h.1M656.7 344.2h.1M692.1 349.1h.1M679.0 347.0h.1M680.7 348.3h.1M700.4 354.4h.1M683.9 350.1h.1M688.7 346.9h.1M702.5 352.3h.1M676.3 346.7h.1M692.9 348.3h.1M689.3 347.7h.1M684.7 347.2h.1M685.4 347.3h.1M683.0 347.0h.1M680.4 350.8h.1M686.8 351.3h.1M683.1 351.2h.1M678.4 347.6h.1M670.8 346.6h.1M682.4 348.8h.1M682.5 345.3h.1M679.3 348.7h.1M691.7 347.8h.1M673.2 348.3h.1M683.6 347.9h.1M671.7 339.6h.1M674.6 341.4h.1M668.5 342.8h.1M678.0 344.5h.1M664.0 342.2h.1M669.7 340.3h.1M695.1 349.5h.1M701.4 348.4h.1M693.3 350.6h.1M693.6 349.1h.1M702.6 353.0h.1M702.4 352.1h.1M722.8 379.7h.1M723.9 381.7h.1M720.6 391.2h.1M723.8 387.6h.1M708.0 404.6h.1M714.3 393.5h.1M720.4 389.2h.1M705.1 411.0h.1M718.1 396.8h.1M725.3 385.3h.1M731.2 393.2h.1M715.4 385.4h.1M728.3 392.8h.1M725.1 392.7h.1M737.6 396.6h.1M722.4 386.3h.1M733.4 375.0h.1M722.7 401.7h.1M721.1 404.6h.1M722.1 402.8h.1M733.2 380.1h.1M714.7 407.0h.1M723.6 383.3h.1M722.1 401.7h.1M719.4 393.1h.1M715.1 390.9h.1M720.5 395.9h.1M718.4 387.9h.1M725.9 394.3h.1M729.4 378.6h.1M729.1 384.5h.1M729.2 375.4h.1M726.4 383.8h.1M728.9 379.9h.1M725.8 383.7h.1M740.8 368.6h.1M732.0 368.2h.1M752.6 374.8h.1M787.1 390.6h.1M784.9 390.8h.1M786.8 392.4h.1M786.6 394.1h.1M787.1 383.9h.1M787.6 394.6h.1M781.7 394.5h.1M771.7 407.7h.1M777.6 409.5h.1M761.5 420.3h.1M760.2 420.7h.1M696.2 413.4h.1"/>
<path stroke="#e9b566" stroke-width="1.5" d="M539.6 227.4h.1M544.2 215.7h.1M536.9 227.7h.1M538.0 207.1h.1M537.9 210.1h.1M544.6 215.8h.1M540.6 214.2h.1M539.0 225.2h.1M514.7 235.6h.1M589.0 193.2h.1M618.6 141.6h.1M628.4 137.8h.1M554.4 166.6h.1M581.8 222.0h.1M584.2 221.4h.1M580.8 222.2h.1M583.8 214.5h.1M583.5 216.7h.1M585.6 217.1h.1M580.3 216.2h.1M582.0 222.3h.1M586.5 217.2h.1M585.6 214.1h.1M585.1 221.3h.1M587.4 214.3h.1M592.2 233.4h.1M587.9 230.9h.1M591.2 234.5h.1M586.6 229.1h.1M589.8 231.0h.1M586.5 232.3h.1M590.4 231.4h.1M584.6 232.2h.1M595.6 232.0h.1M587.9 233.4h.1M591.4 229.3h.1M593.4 229.6h.1M591.5 231.3h.1M587.9 226.8h.1M589.3 227.6h.1M593.9 233.1h.1M592.2 232.5h.1M593.9 233.0h.1M586.9 232.9h.1M590.6 231.0h.1M575.5 229.3h.1M569.3 235.1h.1M606.6 233.6h.1M606.3 236.7h.1M614.4 240.1h.1M623.1 237.5h.1M622.8 239.0h.1M632.5 241.7h.1M635.0 238.2h.1M646.6 242.9h.1M582.8 258.3h.1M592.0 258.8h.1M594.8 254.8h.1M588.9 243.9h.1M581.2 253.1h.1M657.1 260.4h.1M719.2 167.7h.1M714.7 184.1h.1M690.7 215.4h.1M699.1 203.0h.1M693.7 211.4h.1M691.1 205.5h.1M684.6 209.4h.1M702.8 213.9h.1M696.8 208.4h.1M702.8 199.8h.1M704.6 206.9h.1M700.4 199.9h.1M690.5 210.3h.1M701.8 209.4h.1M698.8 215.2h.1M693.2 212.0h.1M700.3 211.3h.1M698.7 204.1h.1M704.4 203.7h.1M692.2 213.0h.1M698.4 210.8h.1M686.7 207.9h.1M691.1 214.4h.1M695.7 215.4h.1M694.2 208.4h.1M707.8 204.7h.1M709.6 218.3h.1M709.3 228.2h.1M712.4 226.1h.1M712.1 220.2h.1M683.1 214.2h.1M686.2 222.7h.1M683.2 222.7h.1M680.8 218.6h.1M687.5 227.2h.1M684.9 216.4h.1M680.4 220.1h.1M687.5 227.0h.1M680.3 216.6h.1M691.9 242.9h.1M693.7 236.4h.1M696.6 243.7h.1M683.1 242.7h.1M686.9 239.7h.1M695.7 247.3h.1M689.9 247.5h.1M687.8 239.5h.1M688.8 247.3h.1M698.9 245.0h.1M679.6 262.1h.1M676.5 259.2h.1M681.0 259.0h.1M697.3 252.7h.1M694.8 253.7h.1M715.4 244.3h.1M714.0 246.3h.1M713.6 246.2h.1M714.4 244.3h.1M669.7 208.1h.1M700.2 238.6h.1M706.2 240.1h.1M707.6 236.2h.1M699.2 233.3h.1M728.4 206.3h.1M727.4 211.4h.1M726.9 210.6h.1M729.4 209.3h.1M726.7 200.7h.1M723.8 200.6h.1M746.4 211.3h.1M743.4 212.1h.1M741.9 214.3h.1M743.4 212.6h.1M738.7 220.9h.1M736.6 220.5h.1M653.9 283.2h.1M660.5 307.6h.1M675.3 296.3h.1M672.6 294.8h.1M675.1 345.9h.1M688.6 348.4h.1M681.1 348.8h.1M672.2 345.8h.1M675.3 348.0h.1M679.5 345.8h.1M687.4 349.0h.1M686.8 350.0h.1M689.7 347.5h.1M686.7 349.6h.1M677.8 346.7h.1M685.1 349.1h.1M667.4 342.7h.1M699.5 352.8h.1M718.0 394.4h.1M721.2 388.3h.1M723.1 395.8h.1M715.1 392.0h.1M732.0 381.3h.1M729.7 383.4h.1M733.6 382.7h.1M736.4 371.2h.1M755.3 368.7h.1M785.5 392.9h.1"/>
</g>
<path d="M495.1 293.1 A175 175 0 0 1 577.3 138.6" fill="none" stroke="#a9bfce" stroke-width="10" opacity=".2" filter="url(#bl9)"/>
<path d="M496.7 262.6 A175 175 0 0 1 539.9 169.9" fill="none" stroke="#a9bfce" stroke-width="10" opacity=".3" filter="url(#bl9)"/>
<rect x="480" y="100" width="380" height="380" fill="url(#sh)"/>
</g>
<circle cx="670" cy="287" r="181.3" fill="none" stroke="url(#rim)" stroke-width="1.6"/>
</svg>
<svg class="abs" id="wm" style="left:0;top:0" width="762" height="429" viewBox="289 71 762 429">
<defs>
<linearGradient id="kg" x1="0" y1="0" x2="0" y2="1"><stop offset="0" stop-color="#c6c6c6"/><stop offset=".55" stop-color="#cbcbcb"/><stop offset="1" stop-color="#dcdcdc"/></linearGradient>
<linearGradient id="og" x1="0" y1="0" x2="1" y2="1"><stop offset="0" stop-color="#e8813f"/><stop offset="1" stop-color="#d4571c"/></linearGradient>
<filter color-interpolation-filters="sRGB" id="lb" x="-5%" y="-5%" width="110%" height="110%"><feGaussianBlur stdDeviation=".55"/></filter>
<filter color-interpolation-filters="sRGB" id="lb2" x="-30%" y="-30%" width="160%" height="160%"><feGaussianBlur stdDeviation="1.2"/></filter>
</defs>
<!-- logo -->
<g filter="url(#lb)">
<path d="M343.5 122.3 L378 122.3 L386.6 134.5 L390 169 Q390.4 176 384 176.3 L340 176.3 Q333.6 176 334 169 L336.2 134.5 Z" fill="url(#kg)" stroke="#2b6c9c" stroke-width="1.5" stroke-linejoin="round"/>
<path d="M336.5 157 Q362 153.5 388 157 L389.2 169.5 Q389.3 175.3 384 175.5 L340 175.5 Q334.8 175.3 334.9 169.5 Z" fill="#d4d4d4" filter="url(#lb2)"/>
<path d="M341.5 158 L345.5 157.5 L344 169 L339 168 Z" fill="#8f9297" filter="url(#lb2)"/>
<path d="M357 128.6 L366 127.2 L366 151 L357 152.4 Z" fill="url(#og)"/>
<path d="M347 136.8 L376 132.6 L376 141.2 L347 145.4 Z" fill="url(#og)"/>
<text x="401" y="149.2" font-family="Liberation Sans, sans-serif" font-weight="bold" font-style="italic" font-size="27" textLength="97" lengthAdjust="spacingAndGlyphs" fill="#c4c4c4" stroke="#1e4a6b" stroke-width="1.6" paint-order="stroke" stroke-linejoin="round">RENE.E</text>
<text x="401.5" y="168.8" font-family="Liberation Sans, sans-serif" font-weight="bold" font-size="17.5" textLength="94.5" lengthAdjust="spacingAndGlyphs" fill="#5b98bf">Laboratory</text>
</g>
<!-- selection frame -->
<rect x="329.25" y="110.3" width="173.6" height="78.4" fill="none" stroke="#f4f4f4" stroke-width="2.5"/>
<g fill="#000">
<rect x="326.5" y="107.5" width="5.5" height="6.5"/><rect x="501.6" y="107.5" width="5" height="6.5"/>
<rect x="326.5" y="186.6" width="5.5" height="6"/><rect x="501.6" y="186" width="5" height="6"/>
<rect x="412" y="107.5" width="5" height="6"/><rect x="412" y="185.5" width="5" height="6"/>
<rect x="326.5" y="145.5" width="6" height="4.5"/><rect x="500" y="145.5" width="6" height="4.5"/>
</g>
<!-- rotate handle -->
<path d="M422.62 92.08 A7.07 7.07 0 1 0 419.96 95.69" fill="none" stroke="#f7a900" stroke-width="4"/>
<rect x="414.7" y="97.5" width="2.6" height="11" fill="#f7a900"/>
<!-- pencil -->
<g fill="#dcdcdc">
<path d="M455 100.7 L455.9 97.6 L461.5 92 L464 94.5 L458.4 100.1 Z"/>
<path d="M462.3 91.2 L463.2 90.6 L465.3 92.7 L464.8 93.6 Z" fill="#f2f2f2"/>
</g>
<!-- image icon -->
<rect x="470" y="89" width="16" height="15.8" fill="#fafafa"/>
<rect x="473.6" y="93.5" width="8.8" height="6.8" fill="#fff" stroke="#4d4d4d" stroke-width="1"/>
<path d="M474 100 L474 98.3 L476.2 96.2 L477.8 98 L479.5 97 L482 98.6 L482 100 Z" fill="#5a5a5a"/>
<rect x="479.6" y="95" width="1.6" height="1.6" fill="#666"/>
<!-- trash -->
<g fill="none" stroke="#e6e6e6">
<path d="M492 92.7 H500.8" stroke-width="1.3"/>
<path d="M495 91.3 H497.9" stroke-width="1"/>
<path d="M493 93.6 V100.4 H499.6 V93.6" stroke-width="1.1"/>
<path d="M495.2 94.2 V99.5 M497.4 94.2 V99.5" stroke-width="1" stroke="#cfcfcf"/>
</g>
</svg>

</div>

<div id="playbar" class="abs"></div>
<!-- dimmed background widgets -->
<div class="abs" style="left:23px;top:465px;width:98px;height:34px;background:#37383b;border-radius:4px 0 0 0"></div>
<div class="abs" style="left:121px;top:465px;width:97px;height:34px;background:#2b3341;border-radius:0 4px 0 0"></div>
<div class="abs" style="left:45.5px;top:474px;font-size:13px;font-weight:bold;color:#2c364b;line-height:16px;letter-spacing:.5px;white-space:nowrap">Material</div>
<div class="abs" style="left:133.4px;top:474px;font-size:13px;font-weight:bold;color:#4a4a4b;line-height:16px;letter-spacing:.65px;white-space:nowrap">Watermark</div>
<div class="abs" style="left:1px;top:541px;width:241px;height:1px;background:#353535"></div>
<svg class="abs" style="left:0;top:500px" width="242" height="40" viewBox="0 500 242 40">
<g fill="#243254">
<rect x="26" y="518.6" width="12" height="9.2" rx="1"/>
</g>
<path d="M28.4 519 V516.2 Q28.4 512.6 32 512.6 Q35.6 512.6 35.6 516.2 V519" fill="none" stroke="#243254" stroke-width="1.7"/>
<rect x="31.2" y="521.6" width="1.6" height="2.8" fill="#3a3a3a"/>
<path d="M85.6 514.3 L97 525.8 M97 514.3 L85.6 525.8" stroke="#263557" stroke-width="1.6" fill="none"/>
<path d="M150 527 V514.5 M144.8 519.6 L150 514.4 L155.2 519.6" stroke="#3e3e3e" stroke-width="1.4" fill="none"/>
<path d="M209.5 513.5 V526 M204.3 520.9 L209.5 526.1 L214.7 520.9" stroke="#3e3e3e" stroke-width="1.4" fill="none"/>
</svg>
<div class="abs dimtxt" style="left:72.3px;top:548.3px;font-size:12px;color:#252525">Transition:</div>
<div class="abs" style="left:92px;top:582px;width:207px;height:25px;box-sizing:border-box;border:1px solid #3f3f3f;background:#3a3a3a"></div>
<div class="abs dimtxt" style="left:95.6px;top:589px;font-size:12px;color:#252525;letter-spacing:.25px">No Effect</div>
<svg class="abs" style="left:278px;top:590px" width="16" height="12" viewBox="278 590 16 12"><path d="M279.7 592.8 H291.2 L285.45 599 Z" fill="#2c3c5f"/></svg>

<div class="abs dimtxt" style="left:325.4px;top:548.3px;font-size:12px;color:#252525">Watermark size:</div>
<div class="abs dimtxt" style="left:351px;top:574px;font-size:12px;color:#252525">W:</div>
<div class="abs dimtxt" style="left:353px;top:608.3px;font-size:12px;color:#252525">H:</div>
<div class="abs" style="left:393px;top:579.3px;width:70px;height:3.6px;background:#3b2a1c"></div>
<div class="abs" style="left:393px;top:613.2px;width:70px;height:3.6px;background:#3b2a1c"></div>
<div class="abs" style="left:409px;top:576.9px;width:8.8px;height:8.8px;border-radius:5px;background:#262f42"></div>
<div class="abs" style="left:402px;top:610.3px;width:8.8px;height:8.8px;border-radius:5px;background:#262f42"></div>

<div class="abs" style="left:876px;top:567.3px;width:103px;height:3.6px;background:#3b2a1c"></div>
<div class="abs" style="left:876px;top:606px;width:103px;height:3.6px;background:#3b2a1c"></div>
<div class="abs" style="left:984.6px;top:556.5px;width:42.6px;height:24.7px;box-sizing:border-box;border:1px solid #404040;background:#3a3a3a"></div>
<div class="abs" style="left:984.6px;top:595.5px;width:42.6px;height:24.7px;box-sizing:border-box;border:1px solid #404040;background:#3a3a3a"></div>
<div class="abs dimtxt" style="left:987px;top:561.5px;font-size:13px;color:#252525">0</div>
<div class="abs dimtxt" style="left:987px;top:600.5px;font-size:13px;color:#252525">0</div>
<svg class="abs" style="left:1010px;top:556px" width="16" height="66" viewBox="1010 556 16 66">
<g fill="#262e44">
<path d="M1017.3 562 L1022.2 567 H1012.4 Z"/><path d="M1012.4 571.8 H1022.2 L1017.3 576.6 Z"/>
<path d="M1017.3 601 L1022.2 606 H1012.4 Z"/><path d="M1012.4 610.8 H1022.2 L1017.3 615.6 Z"/>
</g></svg>
<div class="abs" style="left:889px;top:645px;width:94px;height:25.5px;background:#222938;border-radius:3px;color:#3b3e46;font-size:13px;line-height:27.5px;text-align:center">OK</div>
<div class="abs" style="left:989px;top:645px;width:94px;height:25.5px;background:#222938;border-radius:3px;color:#3b3e46;font-size:13px;line-height:27.5px;text-align:center">Cancel</div>

<svg class="abs" id="pb" style="left:242px;top:500px" width="857" height="40" viewBox="242 500 857 40">
<g fill="#3f7fda">
<path d="M250.3 515.2 Q250.3 514.4 251 514.8 L268 524.6 Q268.6 525 268 525.4 L251 535.2 Q250.3 535.6 250.3 534.8 Z"/>
<path d="M280.2 517.2 L293.4 524.6 L280.2 532 Z"/>
<path d="M273.9 531 V536.3 H297.6 V531" fill="none" stroke="#3f7fda" stroke-width="1.5"/>
</g>
<rect x="305" y="519" width="12" height="12" rx="2" fill="#ababab"/>
<!-- tracks -->
<rect x="340" y="523" width="108" height="4" fill="#f77c00"/>
<rect x="455" y="523" width="571" height="4" rx="2" fill="#c9c9c9"/>
<!-- left handle -->
<path d="M327 514 H335.2 Q333.6 514.6 333.6 516.5 V533 Q333.6 535 335.2 535.6 H327 Q325 535.6 325 533.6 V516 Q325 514 327 514 Z" fill="#3f7fda"/>
<path d="M328.4 517.6 V531.8 M330.6 517.6 V531.8" stroke="#fff" stroke-width="1.1"/>
<!-- right handle -->
<path d="M454 514 H445.8 Q447.4 514.6 447.4 516.5 V533 Q447.4 535 445.8 535.6 H454 Q456 535.6 456 533.6 V516 Q456 514 454 514 Z" fill="#3f7fda"/>
<path d="M450.3 517.6 V531.8 M452.5 517.6 V531.8" stroke="#fff" stroke-width="1.1"/>
<!-- thumb -->
<circle cx="340" cy="524.8" r="5.2" fill="#dfe4f0" stroke="#7ea7e3" stroke-width="1"/>
<!-- camera -->
<g>
<path d="M1043 517.3 L1043.6 515.6 Q1043.9 514.9 1044.8 514.9 H1048.6 Q1049.4 514.9 1049.7 515.6 L1050.3 517.3 Z" fill="#3f7fda"/>
<rect x="1040.2" y="517" width="23.7" height="17.9" rx="2.6" fill="#3f7fda"/>
<path d="M1042.2 519.2 H1049 V532.8 H1043.4 Q1042.2 532.8 1042.2 531.6 Z" fill="#fff"/>
<circle cx="1051.6" cy="525.9" r="6.4" fill="#3f7fda"/>
<circle cx="1051.6" cy="525.9" r="4.8" fill="#fff"/>
<path d="M1051.8 523.4 Q1054.2 523.6 1054.3 526.2" fill="none" stroke="#3f7fda" stroke-width="1"/>
<rect x="1059" y="519.2" width="3" height="1.8" fill="#fff"/>
</g>
<path d="M1066.9 524 H1075.2 L1071.05 529.3 Z" fill="#3f7fda"/>
<!-- speaker -->
<path d="M1079 522 H1083 L1088.9 517.8 V531.9 L1083 527.8 H1079 Z" fill="#3f7fda"/>
<path d="M1091 521.3 Q1093.2 524.9 1091 528.5" fill="none" stroke="#3f7fda" stroke-width="1.3"/>
<path d="M1093.6 519.7 Q1097 524.9 1093.6 530.1" fill="none" stroke="#3f7fda" stroke-width="1.3"/>
</svg>
<div class="abs time" style="left:334px;top:504px">00:00:00.000</div>
<div class="abs time" style="left:611.5px;top:503px">00:00:00.000-00:00:05.000</div>
<div class="abs time" style="left:962px;top:503px">00:00:30.528</div>
<div class="abs badge" style="left:841px;top:508px">3</div>

<div id="shadowline" class="abs"></div>

<div id="popup" class="abs">
<style>
#popup .t{position:absolute;font-size:12px;line-height:14px;color:#111;white-space:nowrap;}
#popup .inp{position:absolute;box-sizing:border-box;border:1px solid #b5b5b5;background:#fff;height:25px;top:5.5px;}
#popup .d{position:absolute;top:10.7px;font-size:12px;line-height:14px;color:#111;white-space:nowrap;}
</style>
<!-- coordinates relative to popup (460,543) -->
<div class="abs" style="left:11px;top:6px;width:22px;height:20px;box-sizing:border-box;border:1px solid #a9a9a9;background:#edf0f6"></div>
<div class="abs" style="left:125.8px;top:2.8px;width:290.4px;height:30.2px;background:#f4f4f4"></div>
<div class="abs" style="left:125px;top:11px;width:1px;height:18px;background:#bdbdbd"></div>
<div class="inp" style="left:163px;width:110px"></div>
<div class="inp" style="left:302px;width:110px"></div>
<div class="abs" style="left:166px;top:9px;width:15px;height:16px;background:#0b6fd8"></div>
<svg class="abs" style="left:0;top:0" width="420" height="130" viewBox="460 543 420 130">
<g fill="none" stroke="#5a9bea" stroke-width="1.1">
<path d="M477.3 552.6 H486.8 V555.2 Q486.6 558.2 482.05 559.9 Q477.5 558.2 477.3 555.2 Z"/>
<path d="M482.05 559.9 V565.3 M478.2 565.4 H486"/>
</g>
<path d="M524.2 562.9 A5.4 5.4 0 1 1 519.6 554.1" fill="none" stroke="#3f7fda" stroke-width="1.7"/>
<path d="M519.4 551 L523.3 554 L519.4 557.2 Z" fill="#3f7fda"/>
<g fill="#3f7fda">
<rect x="552.2" y="553.3" width="3.3" height="3.3"/><rect x="556.4" y="553.3" width="3.3" height="3.3"/><rect x="560.6" y="553.3" width="3.3" height="3.3"/>
<rect x="552.2" y="557.4" width="3.3" height="3.3"/><rect x="556.4" y="557.4" width="3.3" height="3.3"/><rect x="560.6" y="557.4" width="3.3" height="3.3"/>
<rect x="552.2" y="561.5" width="3.3" height="3.3"/><rect x="556.4" y="561.5" width="3.3" height="3.3"/><rect x="560.6" y="561.5" width="3.3" height="3.3"/>
</g>
<g fill="none" stroke="#3f7fda" stroke-width="1">
<path d="M550.5 554.5 V551.6 H553.4 M562.8 551.6 H565.7 V554.5 M565.7 563.6 V566.5 H562.8 M553.4 566.5 H550.5 V563.6"/>
</g>
<!-- start/end bg -->
<!-- spinners -->
<g fill="#3f7fda">
<path d="M722.5 553 L727.4 557.6 H717.6 Z"/><path d="M717.6 564 H727.4 L722.5 568.9 Z"/>
<path d="M861.4 553 L866.3 557.6 H856.5 Z"/><path d="M856.5 564 H866.3 L861.4 568.9 Z"/>
</g>
<!-- transparency slider -->
<rect x="645" y="613" width="106" height="3" rx="1.5" fill="#c9c9c9"/>
<rect x="645" y="613" width="31" height="3" rx="1.5" fill="#f77c00"/>
<circle cx="676.6" cy="614.5" r="4.5" fill="#3f7fda"/>
<!-- close X -->
<path d="M468.6 653.4 L479 663.8 M479 653.4 L468.6 663.8" stroke="#3f7fda" stroke-width="3" fill="none"/>
<!-- check -->
<path d="M858.2 658.6 L863.2 663.4 L873 653.2" stroke="#3f7fda" stroke-width="3" fill="none"/>
</svg>
<div class="t" style="left:130.5px;top:11.5px;letter-spacing:.13px">Start:</div>
<div class="t" style="left:277.3px;top:11.5px;letter-spacing:-0.2px">End:</div>
<div class="d" style="left:167px;color:#fff">00</div>
<div class="d" style="left:184px">:00</div>
<div class="d" style="left:206px">:00</div>
<div class="d" style="left:227px">.000</div>
<div class="d" style="left:305.5px">00</div>
<div class="d" style="left:323px">:00</div>
<div class="d" style="left:345px">:05</div>
<div class="d" style="left:366px">.000</div>
<div class="t" style="left:104px;top:64.5px;letter-spacing:-0.08px">Transparence:</div>
<div class="t" style="left:295.5px;top:64.5px">28</div>
</div>
<div class="abs redbox" style="left:571px;top:533px;width:322px;height:48px"></div>
<div class="abs redbox" style="left:550px;top:596px;width:238px;height:41px"></div>
<div class="abs badge" style="left:793px;top:615px">2</div>


<div class="abs redbox" style="left:314px;top:75px;width:207px;height:138px"></div>
<div class="abs badge" style="left:528px;top:96px">1</div>
</body>
</html>
